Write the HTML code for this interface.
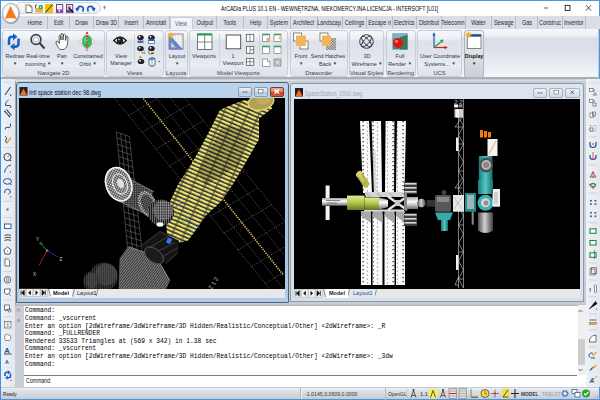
<!DOCTYPE html>
<html><head><meta charset="utf-8">
<style>
*{margin:0;padding:0;box-sizing:border-box}
html,body{width:600px;height:400px;overflow:hidden;background:#c9ced6;font-family:"Liberation Sans",sans-serif;color:#222;position:relative}
.a{position:absolute}
svg{position:absolute;overflow:visible}
#lb{left:0;top:0;width:1px;height:400px;background:#3d8fdf}
#title{left:1px;top:0;width:599px;height:16px;background:#fff}
#ttxt{left:221px;top:3.5px;font-size:7px;line-height:9px;color:#000;white-space:nowrap;transform:scaleX(.738);transform-origin:0 0}
#tabs{left:1px;top:16px;width:599px;height:13px;background:#d9dde5}
.tab{top:16px;height:13px;font-size:6.5px;color:#252a35;line-height:14px;border-right:1px solid #b8bdc6;white-space:nowrap;text-align:center}
.tab span{display:inline-block;transform:scaleX(.84);margin:0 -8px}
.tab.sel{top:17px;height:12px;line-height:12px;background:linear-gradient(#f4f6f9,#e9edf2);border:1px solid #c9ced6;border-bottom:none;color:#4a5a75}
#ribbon{left:1px;top:29px;width:598px;height:50px;background:linear-gradient(#f6f7fa,#eff1f5 14%,#d9dde8 20%,#dde1ea 45%,#e7ecf1 75%,#eff6f8 96%);border-bottom:2px solid #a9aeb6;border-right:1px solid #c4c8d0;border-radius:0 0 2px 0}
.pnl{top:30px;height:47px;border:1px solid #c8cdd6;border-radius:3px;background:linear-gradient(#f6f7fa,#eef0f5 16%,#dde1ea 24%,#e0e4ec 50%,#e8edf2 80%,#edf3f6)}
.plbl{position:absolute;bottom:0;left:0;right:0;height:9px;font-size:5.8px;color:#3a4152;text-align:center;line-height:12px;white-space:nowrap;background:linear-gradient(#e4e8ee,#dde1e8);border-radius:0 0 3px 3px}
.bl b{font-weight:normal;font-size:4.6px;vertical-align:.8px}
.bl{position:absolute;font-size:5.9px;color:#2e3445;text-align:center;line-height:7.1px;white-space:nowrap;transform:translateX(-50%) scaleX(.93)}
.sep{position:absolute;width:1px;background:#cfd3da}
</style></head><body>
<div id="lb" class="a"></div>
<div id="title" class="a"></div>
<div id="ttxt" class="a">ArCADia PLUS 10.1 EN - WEWNĘTRZNA, NIEKOMERCYJNA LICENCJA - INTERSOFT [L01]</div>
<!-- window controls -->
<div class="a" style="left:0;top:0;width:600px;height:1px;background:#4a96e0"></div>
<div class="a" style="left:599px;top:0;width:1px;height:400px;background:#4a96e0"></div>
<svg style="left:0;top:0" width="600" height="16">
 <line x1="543.7" y1="8" x2="548.3" y2="8" stroke="#555" stroke-width=".9"/>
 <rect x="565.2" y="5.4" width="4.8" height="5.1" fill="none" stroke="#222" stroke-width=".9"/>
 <path d="M586 5.2 L591 10.6 M591 5.2 L586 10.6" stroke="#222" stroke-width=".8"/>
</svg>
<div id="tabs" class="a"></div>
<div class="a tab" style="left:22.0px;width:26.0px"><span>Home</span></div>
<div class="a tab" style="left:48.0px;width:21.7px"><span>Edit</span></div>
<div class="a tab" style="left:69.7px;width:24.8px"><span>Draw</span></div>
<div class="a tab" style="left:94.5px;width:24.5px"><span>Draw 3D</span></div>
<div class="a tab" style="left:119.0px;width:25.0px"><span>Insert</span></div>
<div class="a tab" style="left:144.0px;width:25.5px"><span>Annotati</span></div>
<div class="a tab sel" style="left:169.5px;width:23.5px"><span>View</span></div>
<div class="a tab" style="left:193.0px;width:24.0px"><span>Output</span></div>
<div class="a tab" style="left:217.0px;width:27.0px"><span>Tools</span></div>
<div class="a tab" style="left:244.0px;width:23.5px"><span>Help</span></div>
<div class="a tab" style="left:267.5px;width:23.5px"><span>System</span></div>
<div class="a tab" style="left:291.0px;width:26.5px"><span>Architect</span></div>
<div class="a tab" style="left:317.5px;width:25.0px"><span>Landscap</span></div>
<div class="a tab" style="left:342.5px;width:24.5px"><span>Ceilings</span></div>
<div class="a tab" style="left:367.0px;width:25.5px"><span>Escape n</span></div>
<div class="a tab" style="left:392.5px;width:24.5px"><span>Electrics</span></div>
<div class="a tab" style="left:417.0px;width:24.7px"><span>Distribut</span></div>
<div class="a tab" style="left:441.7px;width:24.3px"><span>Telecomn</span></div>
<div class="a tab" style="left:466.0px;width:25.7px"><span>Water</span></div>
<div class="a tab" style="left:491.7px;width:24.3px"><span>Sewage</span></div>
<div class="a tab" style="left:516.0px;width:22.0px"><span>Gas</span></div>
<div class="a tab" style="left:538.0px;width:25.0px"><span>Construc</span></div>
<div class="a tab" style="left:563.0px;width:23.0px"><span>Inventor</span></div>
<div id="ribbon" class="a"></div>
<!-- panels -->
<div class="a pnl" style="left:2px;width:103px"><div class="plbl">Navigate 2D</div></div>
<div class="a pnl" style="left:106px;width:57.5px"><div class="plbl">Views</div></div>
<div class="a pnl" style="left:165px;width:22.5px"><div class="plbl">Layouts</div></div>
<div class="a pnl" style="left:189px;width:98.5px"><div class="plbl">Model Viewports</div></div>
<div class="a pnl" style="left:290px;width:57.5px"><div class="plbl">Draworder</div></div>
<div class="a pnl" style="left:349px;width:35px"><div class="plbl">Visual Styles</div></div>
<div class="a pnl" style="left:385.5px;width:30px"><div class="plbl">Rendering</div></div>
<div class="a pnl" style="left:417px;width:45px"><div class="plbl">UCS</div></div>
<div class="a" style="left:464px;top:30px;width:20px;height:47.5px;border:1px solid #aeb3bc;border-radius:3px;background:linear-gradient(#f3f4f7,#e6e8ed 20%,#dcdfe5 50%,#d0d4db 85%,#cacdd4)"></div>
<!-- labels -->
<div class="bl" style="left:14.5px;top:53px">Redraw<br><b>▼</b></div>
<div class="bl" style="left:38px;top:53px">Real-time<br>zooming <b>▼</b></div>
<div class="bl" style="left:62px;top:53px">Pan<br><b>▼</b></div>
<div class="bl" style="left:87.5px;top:53px">Constrained<br>Orbit <b>▼</b></div>
<div class="bl" style="left:120.5px;top:53px">View<br>Manager</div>
<div class="bl" style="left:176.5px;top:53px">Layout<br><b>▼</b></div>
<div class="bl" style="left:204px;top:53px">Viewports</div>
<div class="bl" style="left:233px;top:53px">1<br>Viewport</div>
<div class="bl" style="left:301px;top:53px">Front<br><b>▼</b></div>
<div class="bl" style="left:327.5px;top:53px">Send Hatches<br>Back <b>▼</b></div>
<div class="bl" style="left:366.5px;top:53px">3D<br>Wireframe <b>▼</b></div>
<div class="bl" style="left:400px;top:53px">Full<br>Render <b>▼</b></div>
<div class="bl" style="left:439.5px;top:53px">User Coordinate<br>Systems... <b>▼</b></div>
<div class="bl" style="left:474px;top:53px;color:#111;font-weight:bold;font-size:5.6px">Display<br><b>▼</b></div>
<div class="sep" style="left:133.5px;top:34px;height:32px"></div>
<div class="sep" style="left:218.5px;top:34px;height:32px"></div>
<div class="sep" style="left:259px;top:34px;height:32px"></div>
<svg style="left:0;top:29px" width="600" height="50">
 <!-- Redraw arrows -->
 <path d="M9 16 V11 Q9 7.8 12.2 7.8 H13.5" fill="none" stroke="#1a62c0" stroke-width="2.5"/>
 <path d="M13 4.2 L17.5 7.8 L13 11.4 Z" fill="#1a62c0"/>
 <path d="M18.5 9.5 V14.5 Q18.5 17.7 15.3 17.7 H14" fill="none" stroke="#1a62c0" stroke-width="2.5"/>
 <path d="M14.5 14.1 L10 17.7 L14.5 21.3 Z" fill="#1a62c0"/>
 <!-- magnifier -->
 <circle cx="36" cy="10.5" r="4.8" fill="#fff" stroke="#404040" stroke-width="1.8"/>
 <circle cx="36" cy="10.5" r="2.6" fill="none" stroke="#5a7ac0" stroke-width=".6"/>
 <path d="M39.6 14 L44.5 19.5" stroke="#3a3a3a" stroke-width="2"/>
 <!-- hand -->
 <path d="M57 12 L59.5 14.5 L59 7 Q59.5 5.5 60.5 7 L61 11 L61 5 Q62 3.8 63 5 L63 11 L63.5 5.5 Q64.5 4.5 65.5 6 L65.5 11.5 L66.5 7.5 Q67.8 7 68 8.5 L67.5 15 Q66.5 20 63 20.5 L60 20.5 Q58 19 56 14 Q56 12 57 12 Z" fill="#fff" stroke="#222" stroke-width=".7"/>
 <!-- orbit -->
 <path d="M87 4 L94.5 12.5 L87 21 L79.5 12.5 Z" fill="#f2f2f2" stroke="#aaa" stroke-width=".6"/>
 <ellipse cx="87" cy="12.5" rx="5" ry="6.5" fill="#3cb45a"/>
 <ellipse cx="86" cy="11" rx="2" ry="3" fill="#7ad88a" opacity=".7"/>
 <path d="M87 3 V22" stroke="#e8202a" stroke-width="1" stroke-dasharray="2 1"/>
 <path d="M85.5 5 L87 2.5 L88.5 5 Z" fill="#e8202a"/>
 <!-- eye -->
 <path d="M113.8 11.5 Q120 4.6 126.2 11.5 Q120 18.4 113.8 11.5 Z" fill="#fff" stroke="#1a1a1a" stroke-width="1.4"/>
 <circle cx="120" cy="11.5" r="3.2" fill="#222"/>
 <circle cx="119" cy="10.5" r="0.8" fill="#ddd"/>
 <!-- small view icons -->
 <g transform="translate(0,1)">
 <g fill="#222">
  <ellipse cx="140.5" cy="7.5" rx="3.3" ry="2.6"/><ellipse cx="151.5" cy="7.5" rx="3.3" ry="2.6"/>
  <ellipse cx="140.5" cy="18.5" rx="3.3" ry="2.6"/><ellipse cx="151.5" cy="18.5" rx="3.3" ry="2.6"/>
  <ellipse cx="141" cy="31.5" rx="3.3" ry="2.6"/>
 </g>
 <g fill="#fff"><circle cx="139.6" cy="6.8" r=".9"/><circle cx="150.6" cy="6.8" r=".9"/><circle cx="139.6" cy="17.8" r=".9"/><circle cx="150.6" cy="17.8" r=".9"/><circle cx="140.1" cy="30.8" r=".9"/></g>
 <path d="M137.5 10.5 h6 v2.5 h-6z" fill="#3a78c8"/><path d="M140 10.5 v2.5" stroke="#d33" stroke-width=".9"/>
 <rect x="148.7" y="9.8" width="5.6" height="3.6" fill="#fff" stroke="#2a5aa8" stroke-width=".7"/>
 <rect x="148.7" y="9.8" width="5.6" height="1.2" fill="#2a5aa8"/>
 <circle cx="143" cy="21.8" r="1.4" fill="#fff" stroke="#333" stroke-width=".5"/><path d="M144 22.8 l1.2 1.2" stroke="#333" stroke-width=".6"/>
 <path d="M148.8 20.3 v3.6 h4" stroke="#2a2" stroke-width=".8" fill="none"/><rect x="151" y="22.5" width="3" height="1.5" fill="#d22"/>
 <circle cx="140.5" cy="27.3" r="1.4" fill="#f0a020"/>
 <path d="M149 29 L152 27.5 L155 28.5 V35 L152 36.5 L149 35 Z" fill="#fff" stroke="#1f3f70" stroke-width=".8"/>
 <path d="M149 29 L152 30.3 L155 28.5 M152 30.3 V36.5" fill="none" stroke="#1f3f70" stroke-width=".5"/>
 <path d="M149 29 L152 27.5 L155 28.5 L152 30.3 Z" fill="#4a8ad8"/>
 </g>
 <path d="M158 32 h2.5 l-1.25 1.3z" fill="#444"/>
 <!-- layout icon -->
 <rect x="169" y="5" width="14" height="15" fill="#fff" stroke="#555" stroke-width=".7"/>
 <path d="M169.5 7 h13 M169.5 10 h13 M169.5 13 h13 M169.5 16 h13 M172 5 v15 M175 5 v15 M178 5 v15 M181 5 v15" stroke="#bbb" stroke-width=".4"/>
 <path d="M169 5 L169 20.5 L183 20.5 Z" fill="#6a82c8"/>
 <path d="M171 13 L171 18.5 L176 18.5 Z" fill="#c8ccd8"/>
 <path d="M171 2.5 v8 M167 6.5 h8 M168.2 3.7 l5.6 5.6 M173.8 3.7 l-5.6 5.6" stroke="#f6b22a" stroke-width=".7"/><circle cx="171" cy="6.5" r="2" fill="#f6b22a"/>
 <!-- viewports icon -->
 <rect x="197.5" y="5" width="14.5" height="15.5" fill="#fff" stroke="#444" stroke-width=".7"/>
 <rect x="197.5" y="4.5" width="14.5" height="2" fill="#18a058"/>
 <path d="M197.5 13 h14.5 M204.7 6 v14.5" stroke="#666" stroke-width=".8"/>
 <!-- 1 viewport -->
 <rect x="226.2" y="6" width="14.5" height="13.8" fill="#fff" stroke="#444" stroke-width=".9"/>
 <g transform="translate(0,1)">
 <g fill="#fff" stroke="#444" stroke-width=".7">
  <rect x="246.3" y="4.3" width="7.5" height="7"/><rect x="246.3" y="16.3" width="7.5" height="7"/><rect x="246.3" y="28.3" width="7.5" height="7"/>
 </g>
 <path d="M250 4.3 v7 M250 16.3 v7 M250 19.8 h3.8 M250 28.3 v7 M246.3 31.8 h7.5" stroke="#444" stroke-width=".6"/>
 <g fill="#fff" stroke="#666" stroke-width=".6">
  <rect x="262.5" y="4" width="7" height="7.5"/><rect x="274" y="4" width="7" height="7.5"/>
  <rect x="262.5" y="16" width="7" height="7.5"/><rect x="274" y="16" width="7" height="7.5"/>
  <path d="M262.5 29 h5 v2.5 h2.5 v5 h-7.5z"/><rect x="274" y="29" width="7" height="7" fill="#ccc"/>
 </g>
 <rect x="262.5" y="4" width="7" height="1.3" fill="#2aa860"/><rect x="274" y="4" width="7" height="1.3" fill="#2aa860"/>
 <rect x="262.5" y="16" width="7" height="1.3" fill="#2aa860"/><rect x="274" y="16" width="7" height="1.3" fill="#2aa860"/>
 <circle cx="268" cy="9.5" r="1.8" fill="#e0b860"/><circle cx="280" cy="8" r="1.6" fill="#e8d070"/>
 <rect x="276" y="31" width="3" height="3" fill="#eee" stroke="#888" stroke-width=".4"/>
 
 </g>
<!-- front -->
 <rect x="293.5" y="4" width="8" height="8" fill="#fff" stroke="#555" stroke-width=".7"/>
 <rect x="300" y="12" width="8" height="8" fill="#fff" stroke="#555" stroke-width=".7"/>
 <rect x="296" y="6.5" width="10" height="10.5" fill="#f0b45a"/>
 <!-- send hatches back -->
 <rect x="320" y="4" width="8" height="8" fill="#fff" stroke="#555" stroke-width=".7"/>
 <defs><pattern id="chk" width="1.6" height="1.6" patternUnits="userSpaceOnUse"><rect width="1.6" height="1.6" fill="#f4f4f4"/><rect width=".8" height=".8" fill="#555"/><rect x=".8" y=".8" width=".8" height=".8" fill="#555"/></pattern></defs>
 <rect x="326" y="9" width="10" height="12" fill="url(#chk)"/>
 <rect x="322" y="6.5" width="9" height="10.5" fill="#f0b45a"/>
 <!-- wireframe sphere -->
 <g fill="none" stroke="#1f2a38" stroke-width=".9">
  <circle cx="366.5" cy="12.5" r="6.8"/>
  <ellipse cx="366.5" cy="12.5" rx="6.8" ry="2.6" transform="rotate(48 366.5 12.5)"/>
  <ellipse cx="366.5" cy="12.5" rx="6.8" ry="2.6" transform="rotate(-48 366.5 12.5)"/>
 </g>
 <!-- full render -->
 <rect x="392.5" y="4.5" width="15" height="16" fill="#4a8a6a"/>
 <rect x="392.5" y="4.5" width="15" height="5" fill="#7ab0c8"/>
 <path d="M400 8 L407.5 6 L407.5 20.5 L400 20.5 Z" fill="#3a7a58"/>
 <circle cx="398" cy="14" r="5" fill="#d81818"/>
 <circle cx="396.5" cy="12.3" r="1.5" fill="#ff8080"/>
 <!-- UCS -->
 <path d="M434 6 V18.5" stroke="#1a5aa8" stroke-width="1.2"/>
 <path d="M434 18.5 H445" stroke="#d82020" stroke-width="1.2"/>
 <path d="M434 18.5 L441.5 12.5" stroke="#18a048" stroke-width="1.2"/>
 <path d="M432.3 6.5 L434 3.2 L435.7 6.5z" fill="#1a5aa8"/>
 <path d="M444.5 16.8 L447.8 18.5 L444.5 20.2z" fill="#d82020"/>
 <path d="M440 11 L443.5 10.5 L442.5 14z" fill="#18a048"/>
 <!-- display -->
 <rect x="467.2" y="5.5" width="13.8" height="14" fill="#fff" stroke="#555" stroke-width=".7"/>
 <rect x="467.2" y="5.5" width="13.8" height="2.2" fill="#1f4fa8"/>
 <circle cx="468.5" cy="5.8" r="2.3" fill="#f7b02a"/>
 <path d="M468.5 2.3 v7 M465 5.8 h7 M466 3.3 l5 5 M471 3.3 l-5 5" stroke="#f7b02a" stroke-width=".6"/>
</svg>
<!-- QAT -->
<div class="a" style="left:15px;top:2px;width:86px;height:12px;border:1px solid #cfd3da;border-radius:6px;background:linear-gradient(#fafbfc,#eceef2)"></div>
<svg style="left:0;top:0" width="110" height="28">
 <defs>
  <radialGradient id="lg" cx="40%" cy="35%" r="70%"><stop offset="0" stop-color="#f4f4f4"/><stop offset=".7" stop-color="#d0d0d0"/><stop offset="1" stop-color="#8a8a8a"/></radialGradient>
 </defs>
 <ellipse cx="10.85" cy="13.4" rx="8.8" ry="10.3" fill="url(#lg)" stroke="#a0a0a0" stroke-width=".6"/>
 <ellipse cx="10.85" cy="13.4" rx="7.3" ry="8.8" fill="#fbfbfb"/>
 <path d="M10.4 5.8 L17 19.2 Q11 17.2 5 18.8 Z" fill="#f47a1a"/>
 <!-- new -->
 <path d="M26 5 h4 l2 2 v5.5 h-6 z" fill="#fff" stroke="#444" stroke-width=".7"/><path d="M30 5 v2 h2" fill="none" stroke="#444" stroke-width=".5"/>
 <circle cx="26.2" cy="5.6" r="1.5" fill="#f7b733"/>
 <!-- open -->
 <path d="M35.5 8 h7.5 v4.5 h-7.5 z" fill="#f0b040"/>
 <circle cx="40.8" cy="7" r="2.2" fill="#2aa866"/><path d="M40 6 l1.5 1 l-1.5 1z" fill="#fff"/>
 <path d="M35.5 5 v3.5 M35.5 5 h1.5" stroke="#333" stroke-width=".8" fill="none"/>
 <!-- yellow -->
 <rect x="45" y="4" width="8" height="9" fill="#f2c200"/>
 <path d="M45.5 12.5 L52.5 4.5" stroke="#222" stroke-width="1"/>
 <!-- save -->
 <rect x="56.5" y="4.5" width="6.2" height="7.8" fill="#fff" stroke="#7a3a9a" stroke-width="1"/>
 <rect x="56.5" y="9.5" width="6.2" height="2.8" fill="#7a3a9a"/><rect x="58.3" y="10.3" width="2" height="1.3" fill="#fff"/><rect x="57.8" y="5.5" width="3.6" height="2.6" fill="#e8e8e8"/>
 <!-- saveas -->
 <rect x="66.5" y="4.5" width="6.2" height="7.8" fill="#fff" stroke="#7a3a9a" stroke-width="1"/>
 <rect x="66.5" y="9.5" width="6.2" height="2.8" fill="#7a3a9a"/><rect x="67.5" y="5.5" width="3.5" height="3" fill="#e0a090"/>
 <path d="M68.5 7.5 L73.5 12.5" stroke="#111" stroke-width="1.3"/>
 <!-- undo -->
 <path d="M82.8 11.6 Q84.6 6.2 80.2 6.4 Q78 6.6 77.4 9" fill="none" stroke="#1a5ac8" stroke-width="1.7"/>
 <path d="M75.3 7.8 L79.6 8.4 L76.9 11.8 Z" fill="#1a5ac8"/>
 <!-- redo -->
 <path d="M88.2 11.6 Q86.4 6.2 90.8 6.4 Q93 6.6 93.6 9" fill="none" stroke="#1a5ac8" stroke-width="1.7"/>
 <path d="M95.7 7.8 L91.4 8.4 L94.1 11.8 Z" fill="#1a5ac8"/>
 <!-- dropdown -->
 <path d="M103.5 6.3 h2 M103.5 7.5 h2" stroke="#333" stroke-width=".6"/>
 <path d="M103.6 8.6 L105.4 8.6 L104.5 9.6 Z" fill="#333"/>
</svg>
<style>
#mdi{left:14px;top:80px;width:572px;height:226px;background:#c8ccd3;border-top:1px solid #dde0e5;border-left:2px solid #a2a6ac}
.tbar{width:14px;background:linear-gradient(90deg,#eef1f5,#e4e8ee)}
.grip{position:absolute;left:3px;width:8px;height:1px;border-top:1px dotted #9aa}
.wbtn{position:absolute;height:10px;border:1px solid #8a9bb0;border-radius:2px;background:linear-gradient(#e6eef7,#d4e0ee 48%,#b4c8df 52%,#c4d6ea)}
.wbtn.c{border-color:#7a3a30;background:linear-gradient(#eaa898,#de8270 48%,#c4422c 52%,#d05a40)}
.wtxt{position:absolute;font-size:6.6px;line-height:8px;white-space:nowrap}
.tabbar{position:absolute;background:#e8e8e8}
.nb{position:absolute;top:1px;width:6.5px;height:7px;background:linear-gradient(#f5f5f5,#d8d8d8);border:1px solid #b0b0b0}
.mtab{position:absolute;font-size:6px;line-height:8px;white-space:nowrap}
</style>
<div id="mdi" class="a"></div>
<!-- left toolbar -->
<div class="a tbar" style="left:1px;top:79px;height:308px"></div>
<div class="a tbar" style="left:586px;top:79px;height:308px"></div>
<!-- window 1 -->
<div class="a" style="left:16px;top:81.5px;width:273px;height:221px;border:1px solid #4a6478;border-radius:3px 3px 0 0;background:linear-gradient(#bcd3ec,#aec8e6 30%,#a9c4e4 70%,#b0cae7)"></div>
<div class="a" style="left:19px;top:97.5px;width:266px;height:191px;background:#000" id="vp1"></div>
<div class="tabbar" style="left:19px;top:288.5px;width:266px;height:9px"></div>
<div class="wbtn" style="left:237.5px;top:86.5px;width:14px"></div>
<div class="wbtn" style="left:253.5px;top:86.5px;width:14px"></div>
<div class="wbtn c" style="left:269.5px;top:86.5px;width:14.5px"></div>
<svg style="left:0;top:0" width="600" height="400">
 <rect x="243" y="91.5" width="4" height="1.3" fill="#fff" stroke="#444" stroke-width=".4"/>
 <rect x="258.5" y="89.5" width="4.5" height="3.5" fill="#fff" stroke="#444" stroke-width=".5"/>
 <path d="M274.5 89.5 L279 93.5 M279 89.5 L274.5 93.5" stroke="#fff" stroke-width="1.5"/>
 <rect x="19.5" y="87" width="8" height="8.5" fill="#1a2230"/>
 <path d="M23.5 88.5 L27 95 L20 95 Z" fill="#ff6a10"/>
</svg>
<div class="wtxt" style="left:29px;top:88.8px;color:#10102a;transform:scaleX(.845);transform-origin:0 0">Intl space station dec 98.dwg</div>
<!-- window 2 -->
<div class="a" style="left:289.5px;top:82.5px;width:294px;height:219.5px;border:1px solid #8f9aa8;border-radius:3px 3px 0 0;background:linear-gradient(#dde5ee,#dae3ed 10%,#d8e1eb)"></div>
<div class="a" style="left:294px;top:99px;width:286px;height:190px;background:#000" id="vp2"></div>
<div class="tabbar" style="left:294px;top:289px;width:286px;height:9px"></div>
<div class="wbtn" style="left:533px;top:88px;width:14px;border-color:#a7b3c2;background:linear-gradient(#eef2f7,#dde5ee 50%,#d2dce8)"></div>
<div class="wbtn" style="left:549px;top:88px;width:14px;border-color:#a7b3c2;background:linear-gradient(#eef2f7,#dde5ee 50%,#d2dce8)"></div>
<div class="wbtn" style="left:565px;top:88px;width:14.5px;border-color:#a7b3c2;background:linear-gradient(#eef2f7,#dde5ee 50%,#d2dce8)"></div>
<svg style="left:0;top:0" width="600" height="400">
 <rect x="538" y="92.5" width="4" height="1.3" fill="#fff" stroke="#555" stroke-width=".4"/>
 <rect x="554" y="90.5" width="4.5" height="3.5" fill="#fff" stroke="#555" stroke-width=".5"/>
 <path d="M570.5 90.5 L574 94 M574 90.5 L570.5 94" stroke="#666" stroke-width="1"/>
 <rect x="295" y="88" width="8" height="8.5" fill="#1a2230"/>
 <path d="M299 89.5 L302.5 96 L295.5 96 Z" fill="#ff6a10"/>
</svg>
<div class="wtxt" style="left:304.7px;top:89.6px;color:#a0a8b4;transform:scaleX(.80);transform-origin:0 0">SpaceStation_2000.dwg</div>
<svg class="a" style="left:19px;top:97.5px;overflow:hidden" width="266" height="191" viewBox="19 97.5 266 191">
<defs>
<pattern id="ystripe" width="11" height="3.85" patternUnits="userSpaceOnUse" patternTransform="rotate(23)"><rect width="11" height="3.85" fill="#0e0e0c"/><rect width="11" height="2.3" fill="#ece47a"/><rect x="2" y="2.3" width="3" height=".45" fill="#c8c060"/><rect x="7.5" y="0" width=".9" height="2" fill="#2a2a22"/><rect y="2.75" width="11" height=".55" fill="#505048"/></pattern>
<pattern id="mesh" width="1.6" height="1.6" patternUnits="userSpaceOnUse"><rect width="1.6" height="1.6" fill="#404040"/><rect width="1" height="1" fill="#f0f0f0"/></pattern>
<pattern id="meshl" width="2" height="2" patternUnits="userSpaceOnUse"><rect width="2" height="2" fill="#181818"/><rect width="1" height="1" fill="#b8b8b8"/></pattern>
<pattern id="meshg" width="1.8" height="1.8" patternUnits="userSpaceOnUse"><rect width="1.8" height="1.8" fill="#2e2e2e"/><rect width="1" height="1" fill="#8a8a8a"/></pattern>
<pattern id="meshd" width="2" height="2" patternUnits="userSpaceOnUse"><rect width="2" height="2" fill="#1a1a1a"/><rect width="1" height="1" fill="#555"/></pattern>
<pattern id="cstripe" width="6" height="1.5" patternUnits="userSpaceOnUse" patternTransform="rotate(62)"><rect width="6" height="1.5" fill="#333"/><rect width="6" height=".6" fill="#9a9a9a"/></pattern>
</defs>
<path d="M114.0 97 L270.1 289 M128.0 97 L284.1 289 M156.0 97 L312.1 289 M170.0 97 L326.1 289 M184.5 97 L340.6 289 M128.6 115.0 L176.0 86.6 M142.3 131.8 L189.7 103.4 M156.0 148.6 L203.3 120.2 M169.6 165.4 L217.0 137.0 M183.3 182.2 L230.6 153.8 M196.9 199.0 L244.3 170.6 M210.6 215.8 L258.0 187.4 M224.2 232.6 L271.6 204.2 M237.9 249.4 L285.3 221.0 M251.6 266.2 L298.9 237.8 M265.2 283.0 L312.6 254.6 M278.9 299.8 L326.3 271.4" stroke="#b0b0a8" stroke-width=".55" stroke-dasharray="1.3 1.5" fill="none" opacity=".85"/>
<path d="M143.3 98 L283 274" stroke="#d4b060" stroke-width="1.6" stroke-dasharray="1.4 1"/>
<path d="M116.4 131.5 L127.7 248.0 M120.7 133.0 L132.6 249.3 M125.1 134.5 L137.4 250.7 M129.4 136.0 L142.3 252.0 M116.4 131.5 L129.4 136.0 M117.0 137.6 L130.1 142.1 M117.6 143.8 L130.8 148.3 M118.2 149.9 L131.4 154.4 M118.8 156.0 L132.1 160.5 M119.4 162.2 L132.8 166.7 M120.0 168.3 L133.5 172.8 M120.6 174.4 L134.2 178.9 M121.2 180.6 L134.8 185.1 M121.8 186.7 L135.5 191.2 M122.3 192.8 L136.2 197.3 M122.9 198.9 L136.9 203.4 M123.5 205.1 L137.5 209.6 M124.1 211.2 L138.2 215.7 M124.7 217.3 L138.9 221.8 M125.3 223.5 L139.6 228.0 M125.9 229.6 L140.3 234.1 M126.5 235.7 L140.9 240.2 M127.1 241.9 L141.6 246.4 M127.7 248.0 L142.3 252.5" stroke="#8a8a8a" stroke-width=".45" fill="none"/>
<path d="M127.5 177.5 L153.75 191 L143.75 212.5 L117.5 200 Z" fill="url(#meshg)"/>
<path d="M127.5 177.5 L153.75 191 M117.5 200 L143.75 212.5" stroke="#cfcfcf" stroke-width=".5"/>
<ellipse cx="147.5" cy="203.5" rx="8.75" ry="13.75" transform="rotate(-22 147.5 203.5)" fill="url(#mesh)"/>
<ellipse cx="147.5" cy="203.5" rx="6" ry="10" transform="rotate(-22 147.5 203.5)" fill="url(#meshg)"/>
<ellipse cx="118.75" cy="183.75" rx="13.5" ry="18" transform="rotate(-20 118.75 183.75)" fill="url(#mesh)"/>
<ellipse cx="118.75" cy="183.75" rx="12.6" ry="17.1" transform="rotate(-20 118.75 183.75)" fill="none" stroke="#f8f8f8" stroke-width="1.5"/>
<ellipse cx="120" cy="183.5" rx="7" ry="10.5" transform="rotate(-20 120 183.5)" fill="url(#mesh)" stroke="#fafafa" stroke-width=".9"/>
<ellipse cx="120.5" cy="183" rx="3.2" ry="5" transform="rotate(-20 120.5 183)" fill="#e0e0e0"/>
<path d="M219.7 110 L226 106.5 L243 100 L270 98 L272 108 L259 118 L259 139 L234 182 L222 200 L206 215 L197 228 L188 240 L177 243 L167 233 L165 212 L178 184 L193.8 159.5 L208.4 132.5 Z" fill="url(#ystripe)"/>
<ellipse cx="261" cy="101.5" rx="13" ry="8" transform="rotate(-12 261 101.5)" fill="#b0a058" stroke="#e8e070" stroke-width="1.2"/>
<ellipse cx="263" cy="100" rx="7" ry="4" fill="#c8b060" opacity=".7"/>
<path d="M222 126 L250 128 L238 165 L206 185 L198 172 Z" fill="#000" opacity=".25"/>
<path d="M166 203 L193 232" stroke="#20c040" stroke-width=".6"/>
<path d="M164 213 L168 210 M185 218 L200 228 M176 206 L183 202" stroke="#2040e0" stroke-width=".8"/>
<circle cx="161" cy="212" r="13" fill="url(#meshl)"/>
<circle cx="163" cy="210" r="10" fill="url(#mesh)" opacity=".55"/>
<ellipse cx="160" cy="224" rx="3.5" ry="2.2" fill="#fff"/>
<path d="M140 246 L160 231 L179 240 L178 252 L166 263 Z" fill="#141414"/>
<path d="M140 246 L160 231 L179 240 M146 249 L168 236 M154 253 L175 242 M160 258 L178 247 M166 263 L178 252" stroke="#7a7a7a" stroke-width=".45" fill="none"/>
<rect x="167" y="237.5" width="4.5" height="5.5" fill="#2a7ae8" transform="rotate(25 169 240)"/>
<path d="M128.6 246 L145 252 L160.7 264 L170 280 L166 289 L119 289 L120 258 Z" fill="url(#cstripe)"/>
<path d="M128.6 246 L145 252 L160.7 264 L170 280" fill="none" stroke="#a0a0a0" stroke-width=".7"/>
<path d="M128.6 246 L120 258 L119 289" fill="none" stroke="#707070" stroke-width=".6"/>
<ellipse cx="154" cy="255" rx="11" ry="6.5" transform="rotate(38 154 255)" fill="#1c1c1c" stroke="#5a5a5a" stroke-width=".9"/>
<circle cx="104" cy="276" r="14" fill="url(#meshd)"/>
<circle cx="106" cy="274" r="11" fill="#606060" opacity=".45"/>
<ellipse cx="91" cy="281" rx="8" ry="10" fill="url(#meshd)"/>
<ellipse cx="92" cy="280" rx="6" ry="8" fill="#606060" opacity=".4"/>
<path d="M47 250 L40 242" stroke="#1fa03a" stroke-width=".9"/>
<path d="M47 250 L58 256.5" stroke="#1838c8" stroke-width=".9"/>
<path d="M47 250 L39 265" stroke="#c02020" stroke-width=".9"/>
<circle cx="47" cy="250" r="1" fill="none" stroke="#ddd" stroke-width=".5"/>
<circle cx="41" cy="243" r="1.2" fill="none" stroke="#1fa03a" stroke-width=".6"/>
<text x="36" y="240" fill="#ddd" font-size="4.5" font-family="Liberation Sans">Y</text>
<text x="59.5" y="260" fill="#ddd" font-size="4.5" font-family="Liberation Sans">Z</text>
<text x="33" y="275" fill="#ddd" font-size="4.5" font-family="Liberation Sans">X</text>
<text x="205" y="288" fill="#bbb" font-size="6" font-family="Liberation Sans" transform="rotate(-60 210 283)">Z 1 2</text>
</svg><svg class="a" style="left:294px;top:99px;overflow:hidden" width="286" height="190" viewBox="294 99 286 190">
<defs>
<linearGradient id="ygr" x1="0" y1="0" x2="0" y2="1"><stop offset="0" stop-color="#e0ec9a"/><stop offset=".45" stop-color="#b8cc50"/><stop offset="1" stop-color="#6a7a20"/></linearGradient>
<linearGradient id="teal" x1="0" y1="0" x2="1" y2="0"><stop offset="0" stop-color="#1a7a7a"/><stop offset=".5" stop-color="#50c8c8"/><stop offset="1" stop-color="#1a6a6a"/></linearGradient>
<linearGradient id="gcyl" x1="0" y1="0" x2="1" y2="0"><stop offset="0" stop-color="#505050"/><stop offset=".45" stop-color="#d0d0d0"/><stop offset="1" stop-color="#404040"/></linearGradient>
<linearGradient id="wcyl" x1="0" y1="0" x2="0" y2="1"><stop offset="0" stop-color="#a0a0a0"/><stop offset=".4" stop-color="#ffffff"/><stop offset="1" stop-color="#707070"/></linearGradient>
<pattern id="dots" width="10" height="4" patternUnits="userSpaceOnUse"><rect x="2.5" y="1" width="1.2" height="1.3" fill="#222"/><rect x="7" y="2.5" width="1" height="1" fill="#777"/></pattern>
</defs>
<path d="M360.0 121 L369.0 121 L372.0 193 L363.0 193 Z" fill="#fafafa"/>
<path d="M360.0 121 L369.0 121 L372.0 193 L363.0 193 Z" fill="url(#dots)"/>
<path d="M371.6 121 L381.0 121 L382.0 193 L374.0 193 Z" fill="#fafafa"/>
<path d="M371.6 121 L381.0 121 L382.0 193 L374.0 193 Z" fill="url(#dots)"/>
<path d="M385.6 121 L394.4 121 L394.0 193 L385.0 193 Z" fill="#fafafa"/>
<path d="M385.6 121 L394.4 121 L394.0 193 L385.0 193 Z" fill="url(#dots)"/>
<path d="M397.0 121 L406.0 121 L404.5 193 L396.0 193 Z" fill="#fafafa"/>
<path d="M397.0 121 L406.0 121 L404.5 193 L396.0 193 Z" fill="url(#dots)"/>
<path d="M372.5 150 L375.5 150 L377 193 L374 193Z" fill="#b8b8b8" opacity=".5"/>
<path d="M364 192 L403 192 L405 197 L366 197 Z" fill="#d4d4d4"/><path d="M366 193 l5 4 M377 193 l5 4 M389 193 l5 4" stroke="#888" stroke-width=".6"/>
<path d="M361.0 214 L371.0 214 L371.0 285 L361.0 285 Z" fill="#fafafa"/>
<path d="M361.0 214 L371.0 214 L371.0 285 L361.0 285 Z" fill="url(#dots)"/>
<path d="M372.5 214 L382.5 214 L382.5 285 L372.5 285 Z" fill="#fafafa"/>
<path d="M372.5 214 L382.5 214 L382.5 285 L372.5 285 Z" fill="url(#dots)"/>
<path d="M384.5 214 L394.5 214 L394.5 285 L384.5 285 Z" fill="#fafafa"/>
<path d="M384.5 214 L394.5 214 L394.5 285 L384.5 285 Z" fill="url(#dots)"/>
<path d="M396.0 214 L405.0 214 L405.0 285 L396.0 285 Z" fill="#fafafa"/>
<path d="M396.0 214 L405.0 214 L405.0 285 L396.0 285 Z" fill="url(#dots)"/>
<path d="M361.0 211 L371.0 211 L371.0 223 L361.0 216 Z" fill="#a8a8a8"/>
<path d="M372.5 211 L382.5 211 L382.5 223 L372.5 216 Z" fill="#a8a8a8"/>
<path d="M384.5 211 L394.5 211 L394.5 223 L384.5 216 Z" fill="#a8a8a8"/>
<path d="M396.0 211 L405.0 211 L405.0 223 L396.0 216 Z" fill="#a8a8a8"/>
<rect x="364" y="209.5" width="40" height="2" fill="#d8d8d8"/>
<path d="M356.5 176 L361.5 171.5 L370 184 L365 188.5 Z" fill="#b8b448"/>
<path d="M358.5 174 L363.5 181" stroke="#d8d470" stroke-width="1.5"/>
<ellipse cx="359" cy="173.8" rx="3.5" ry="2.3" transform="rotate(-42 359 173.8)" fill="#d8d070"/>
<rect x="325.6" y="185.5" width="4" height="13" fill="#f4f4f4"/><rect x="325.6" y="206" width="4" height="14" fill="#f4f4f4"/>
<rect x="322" y="198" width="25" height="7.7" fill="url(#wcyl)"/>
<path d="M326 200.5 h14 M327 203 h10" stroke="#555" stroke-width=".7"/>
<rect x="347" y="195.6" width="17.5" height="14.4" fill="url(#ygr)"/>
<rect x="364.5" y="197.4" width="14.5" height="12" fill="url(#ygr)"/>
<path d="M379 197.5 L388 200 L388 207 L379 209.5 Z" fill="url(#wcyl)"/>
<path d="M388 196.5 L407 210 M388 210 L407 196.5" stroke="#e8e8e8" stroke-width="2.2"/>
<rect x="395" y="200" width="5" height="6" fill="#c8c8c8"/>
<rect x="407" y="197" width="11" height="12" fill="url(#wcyl)"/>
<circle cx="421.5" cy="203" r="4.3" fill="url(#gcyl)"/>
<rect x="404" y="182" width="13" height="12" fill="#3a3a3a"/><rect x="404" y="213" width="13" height="13" fill="#3a3a3a"/>
<rect x="404.5" y="183" width="12" height="1.6" fill="#d8d8d8"/>
<rect x="404.5" y="187" width="12" height="1.6" fill="#d8d8d8"/>
<rect x="404.5" y="191" width="12" height="1.6" fill="#d8d8d8"/>
<rect x="404.5" y="214" width="12" height="1.6" fill="#d8d8d8"/>
<rect x="404.5" y="218" width="12" height="1.6" fill="#d8d8d8"/>
<rect x="404.5" y="222" width="12" height="1.6" fill="#d8d8d8"/>
<rect x="404" y="193" width="3" height="17" fill="#888"/>
<path d="M458.5 117 V288 M463.5 99 V288 M458.5 117.0 L463.5 126.0 M458.5 117.0 H463.5 M463.5 126.0 L458.5 135.0 M458.5 135.0 L463.5 144.0 M463.5 144.0 L458.5 153.0 M458.5 144.0 H463.5 M458.5 153.0 L463.5 162.0 M463.5 162.0 L458.5 171.0 M458.5 171.0 L463.5 180.0 M458.5 171.0 H463.5 M463.5 180.0 L458.5 189.0 M458.5 189.0 L463.5 198.0 M463.5 198.0 L458.5 207.0 M458.5 198.0 H463.5 M458.5 207.0 L463.5 216.0 M463.5 216.0 L458.5 225.0 M458.5 225.0 L463.5 234.0 M458.5 225.0 H463.5 M463.5 234.0 L458.5 243.0 M458.5 243.0 L463.5 252.0 M463.5 252.0 L458.5 261.0 M458.5 252.0 H463.5 M458.5 261.0 L463.5 270.0 M463.5 270.0 L458.5 279.0 M458.5 279.0 L463.5 288.0 M458.5 279.0 H463.5 M455 127 L462.5 117 M455 127 H462.5 M455 188 L462 178 M455 188 H462 M455 285 L458.5 277 M455 285 H458.5" stroke="#d0d0d0" stroke-width=".6" fill="none"/>
<path d="M454.5 101 q1.5 -2 3 0 l-3 3 h3 M459.5 101 q1.5 -2 3 0 l-3 3 h3" stroke="#ddd" stroke-width=".6" fill="none"/>
<rect x="454" y="104.5" width="4" height="3" fill="#f4f4f4"/><rect x="458.5" y="104.5" width="4" height="3" fill="#888"/>
<rect x="454.5" y="109" width="8.5" height="8.5" fill="#d0d0d0"/><rect x="456" y="109" width="3" height="8.5" fill="#f4f4f4"/>
<rect x="456" y="137.5" width="2.5" height="13.5" fill="#eee"/>
<rect x="456" y="255" width="2.5" height="15" fill="#f0f0f0"/>
<rect x="453" y="195" width="11" height="16.7" fill="#e8e8e8"/><path d="M454 197 l8 12 M462 197 l-8 12" stroke="#999" stroke-width=".5"/>
<path d="M416.7 198 h10 v10 h-10z" fill="#999" opacity="0"/>
<rect x="426.7" y="200" width="8.3" height="6.7" fill="#333"/>
<rect x="435" y="195" width="16" height="16.7" rx="2" fill="#585858"/><rect x="437" y="197" width="12" height="5" fill="#8a8a8a"/>
<circle cx="444" cy="192.5" r="2.5" fill="#404040"/>
<path d="M435 212.5 L453 212.5 L450 220 L438 220 Z" fill="#38a8a8"/>
<rect x="441" y="220" width="7" height="11" fill="url(#teal)"/>
<rect x="465" y="193" width="11" height="18.7" fill="#2a8a8a"/><rect x="467" y="195" width="7" height="14" fill="#ccc" opacity=".7"/>
<rect x="471.7" y="211.7" width="2" height="13" fill="#888"/>
<rect x="478.8" y="156" width="13.7" height="38" fill="url(#teal)"/>
<ellipse cx="486.2" cy="165" rx="6.8" ry="7.5" fill="#505050"/><ellipse cx="486.2" cy="165" rx="4.8" ry="5" fill="#b8b8b8"/><ellipse cx="486.2" cy="165" rx="3" ry="3" fill="#888"/>
<rect x="480" y="130" width="3" height="7.5" fill="#ee7a10"/><rect x="484" y="131" width="3" height="6.5" fill="#ee7a10"/><rect x="488" y="132" width="3" height="5.5" fill="#ee7a10"/>
<rect x="487.5" y="139" width="10" height="17" fill="#f4f4f4"/><path d="M489 154 L496 141" stroke="#d8a030" stroke-width=".8"/>
<circle cx="485.5" cy="202.8" r="8" fill="#3ab0b0"/><circle cx="485.5" cy="202.8" r="4.5" fill="#d8d8d8"/><circle cx="486" cy="203" r="2.5" fill="#909090"/>
<rect x="492.5" y="189" width="7.5" height="17.7" fill="#f0f0f0"/><rect x="494" y="192" width="4" height="12" fill="#bbb" opacity=".6"/>
<path d="M478 212.5 h15 v18 q-7.5 5 -15 0z" fill="url(#gcyl)"/>
<rect x="478" y="180" width="15" height="14" fill="url(#teal)"/>
</svg><style>
#cmd{left:15px;top:306px;width:571px;height:81px;background:#fff;box-shadow:0 -1.5px 0 #b4b8bf}
#cstrip{left:15px;top:306px;width:9px;height:81px;background:#c9ced6}
#ctext{left:24.6px;top:307.2px;font-family:"Liberation Mono",monospace;font-size:7.3px;line-height:7.65px;color:#000;white-space:pre;transform:scaleX(.857);transform-origin:0 0}
#status{left:1px;top:387px;width:598px;height:13px;background:linear-gradient(#eceef1,#dde0e5 30%,#cdd1d8 85%,#c4c8cf);border-top:1px solid #c8ccd2;border-bottom:1px solid #4a96e0}
.st{position:absolute;font-size:5.8px;color:#333;white-space:nowrap;line-height:8px}
</style>
<div id="cmd" class="a"></div>
<div id="cstrip" class="a"></div>
<div class="a" style="left:24px;top:375px;width:553px;height:1px;background:#808080"></div>
<div class="a" style="left:577.5px;top:305px;width:8px;height:70px;background:#f0f0f0"></div>
<div class="a" style="left:578px;top:339px;width:7px;height:26px;background:#cdcdcd"></div>
<div id="ctext" class="a">Command:
Command: _vscurrent
Enter an option [2dWireframe/3dWireframe/3D Hidden/Realistic/Conceptual/Other] &lt;2dWireframe&gt;: _R
Command: _FULLRENDER
Rendered 33533 Triangles at (569 x 342) in 1.38 sec
Command: _vscurrent
Enter an option [2dWireframe/3dWireframe/3D Hidden/Realistic/Conceptual/Other] &lt;2dWireframe&gt;: _3dw
Command:</div>
<div class="a" style="left:25.8px;top:376.5px;font-size:6.3px;line-height:8px;color:#111;transform:scaleX(.82);transform-origin:0 0">Command:</div>
<div id="status" class="a"></div>
<div class="st" style="left:2.8px;top:390px;transform:scaleX(.82);transform-origin:0 0;color:#222">Ready</div>
<div class="a" style="left:299.5px;top:388px;width:2px;height:11px;border-left:1px solid #b0b4bb;border-right:1px solid #f4f5f7"></div>
<div class="a" style="left:385px;top:388px;width:1px;height:12px;background:#b8bcc3"></div>
<div class="st" style="left:305px;top:390px;transform:scaleX(.9);transform-origin:0 0">-1.0145,0.0609,0.0000</div>
<div class="st" style="left:388px;top:390px;transform:scaleX(.85);transform-origin:0 0">OpenGL</div>
<svg class="a" style="left:0;top:0" width="600" height="400">
<path d="M4 82.5 h7" stroke="#9aa1ab" stroke-width=".6" stroke-dasharray=".7 1.1"/>
<path d="M589 82.8 h8" stroke="#9aa1ab" stroke-width=".6" stroke-dasharray=".7 1.1"/>
<path d="M5 95 L10.5 87" stroke="#1f4f9a" stroke-width="1.1"/><circle cx="10.7" cy="95" r=".7" fill="#222"/>
<path d="M8.5 100 Q4.5 102.5 5.5 105.5 L10.5 105.5" fill="none" stroke="#1f4f9a" stroke-width="1"/><circle cx="10.7" cy="107" r=".7" fill="#222"/>
<path d="M4.5 111 L10 117 M6.5 109.5 L11.5 115.5" stroke="#2a2f3a" stroke-width="1.1"/>
<path d="M4.5 111 L6 112.5 M10 117 L8.5 115.5" stroke="#1f4f9a" stroke-width="1.1"/>
<path d="M5 129.5 Q5.5 126 8 127.5 Q10.5 129 10.5 123.5" fill="none" stroke="#1f4f9a" stroke-width="1"/>
<path d="M5 136 Q8 137.5 6 140 Q4.5 142.5 7.5 143" fill="none" stroke="#1f4f9a" stroke-width="1"/><path d="M7.5 142 L11 137.5" stroke="#f0a020" stroke-width="1.6"/>
<path d="M3.0 147.5 h9" stroke="#c4c9d1" stroke-width=".7"/>
<circle cx="7.5" cy="157" r="3.6" fill="none" stroke="#2a2f3a" stroke-width=".9"/><path d="M7.5 157 L10 154.5" stroke="#1f4f9a" stroke-width=".7"/><circle cx="10.6" cy="160.6" r=".7" fill="#222"/>
<path d="M4.5 172.5 Q5.5 166 11 165" fill="none" stroke="#1f4f9a" stroke-width="1"/><circle cx="10.5" cy="172" r=".6" fill="#222"/>
<ellipse cx="7.5" cy="181.4" rx="4" ry="2.8" fill="none" stroke="#1f4f9a" stroke-width="1"/><circle cx="11" cy="184.5" r=".6" fill="#222"/>
<path d="M4.5 193 Q4.5 189 7.5 189 Q10.5 189 10.5 192.5 L8.5 194" fill="none" stroke="#1f4f9a" stroke-width="1"/><circle cx="10.8" cy="196.8" r=".6" fill="#222"/>
<path d="M3.0 201.4 h9" stroke="#c4c9d1" stroke-width=".7"/>
<rect x="6.5" y="208.5" width="2" height="2" fill="#666"/>
<path d="M3.0 217.6 h9" stroke="#c4c9d1" stroke-width=".7"/>
<rect x="4.5" y="224" width="6.5" height="4.5" fill="#fff" stroke="#1f4f9a" stroke-width=".9"/>
<path d="M4.5 235.5 Q8 234 11 235.5 M4.5 238 Q8 236.5 11 238 M4.5 240.5 Q8 239 11 240.5" stroke="#555" stroke-width="1.1" fill="none"/>
<path d="M7.5 247 L11 249.8 L10 254 L5 254 L4 249.8 Z" fill="#fff" stroke="#2a2f3a" stroke-width=".8"/><circle cx="7.5" cy="251" r=".6" fill="#1f4f9a"/>
<path d="M5 259 h3 l1.5 1.5 v5.5 h-4.5z" fill="#fff" stroke="#444" stroke-width=".7"/><path d="M4 258 v8 h8 v-8z" fill="none" stroke="#999" stroke-width=".4" stroke-dasharray=".8 .8"/>
<path d="M3.0 271.6 h9" stroke="#c4c9d1" stroke-width=".7"/>
<circle cx="7.5" cy="279.8" r="3.3" fill="none" stroke="#444" stroke-width=".8"/><ellipse cx="7.5" cy="279.8" rx="1" ry="1.6" fill="none" stroke="#444" stroke-width=".6"/>
<path d="M4.5 289 h6 l-1 4 l-2.5 1.5 l-2.5 -1.5z" fill="#fff" stroke="#444" stroke-width=".8"/><path d="M9 294 l1.5 1.5" stroke="#1f4f9a" stroke-width=".8"/>
<path d="M3.0 300.0 h9" stroke="#c4c9d1" stroke-width=".7"/>
<rect x="4.5" y="305" width="5" height="5" fill="#fff" stroke="#444" stroke-width=".7"/><path d="M5 311 L8 309" stroke="#1f4f9a" stroke-width=".8"/><circle cx="9.5" cy="310.5" r="1.6" fill="none" stroke="#444" stroke-width=".6"/>
<path d="M3.0 316.8 h9" stroke="#c4c9d1" stroke-width=".7"/>
<rect x="4.5" y="321.5" width="6.5" height="6.5" fill="#fff" stroke="#555" stroke-width=".6"/><path d="M4.5 321.5 L11 328 M11 321.5 L4.5 328 M7.75 321.5 v6.5" stroke="#777" stroke-width=".5"/>
<path d="M5 335 q1.5 -1.5 3 0 q2 -0.5 2.5 1.5 q1 2.5 -1 4 h-4 q-1.5 -2 -0.5 -5.5z" fill="#fff" stroke="#444" stroke-width=".6"/>
<text x="4.3" y="352.5" font-family="Liberation Sans" font-size="7.5" font-weight="bold" fill="#1a4a9a">A</text><path d="M4 354 h7.5" stroke="#1a3a7a" stroke-width=".9"/>
<text x="5" y="363.5" font-family="Liberation Sans" font-size="5.2" font-weight="bold" fill="#1a4a9a">A</text>
<path d="M4 367.7 h8" stroke="#b8bdc5" stroke-width=".6" stroke-dasharray=".8 1"/>
<path d="M5 376 V374 Q5 372.3 7 372.3 H8" fill="none" stroke="#1a62c0" stroke-width="1.6"/><path d="M7.8 370.2 L10.6 372.3 L7.8 374.4z" fill="#1a62c0"/><path d="M10.5 373.5 V376 Q10.5 377.7 8.5 377.7 H7.6" fill="none" stroke="#1a62c0" stroke-width="1.6"/><path d="M7.8 375.6 L5 377.7 L7.8 379.8z" fill="#1a62c0"/><circle cx="11" cy="380.5" r=".6" fill="#222"/>
<rect x="589.5" y="88.5" width="3.5" height="3" fill="#fff" stroke="#333" stroke-width=".5"/><path d="M594 89 v3" stroke="#d22" stroke-width=".8"/><path d="M593 95 l2 -2.5 l1.5 2.5z" fill="#fff" stroke="#1f3f70" stroke-width=".6"/>
<rect x="589.5" y="99.5" width="3.5" height="3" fill="#fff" stroke="#333" stroke-width=".5"/><path d="M594 100 v2" stroke="#d22" stroke-width=".8"/><rect x="593" y="103" width="3" height="3" fill="#fff" stroke="#1f3f70" stroke-width=".6"/>
<rect x="590" y="113" width="3.5" height="4.5" fill="#fff" stroke="#555" stroke-width=".6"/><rect x="592.5" y="112" width="3" height="4" fill="none" stroke="#555" stroke-width=".6"/>
<rect x="590" y="125.5" width="6" height="5.5" fill="none" stroke="#666" stroke-width=".5" stroke-dasharray=".8 .6"/><rect x="590" y="128" width="3" height="3" fill="#fff" stroke="#333" stroke-width=".6"/>
<path d="M589 137.0 h8" stroke="#c4c9d1" stroke-width=".7"/>
<path d="M590 142 v2.5 a3 3 0 0 0 6 0 v-2.5" fill="none" stroke="#1f4f9a" stroke-width="1.2"/><path d="M593 143 v2" stroke="#d22" stroke-width="1"/>
<path d="M590 155 v1.5 a3 3 0 0 0 6 0 v-1.5" fill="none" stroke="#1f4f9a" stroke-width="1.2"/><path d="M593 152 v8" stroke="#d22" stroke-width=".7"/>
<path d="M589 165.0 h8" stroke="#c4c9d1" stroke-width=".7"/>
<path d="M590 177 l3 -5 l3 5z" fill="none" stroke="#333" stroke-width=".7"/><path d="M593 171 v7" stroke="#d22" stroke-width=".7"/>
<path d="M590 185 q3 4 6 0 M590 185 q3 -3 6 0" fill="none" stroke="#2a8a4a" stroke-width="1.3"/><circle cx="590" cy="184.5" r=".8" fill="#d22"/><circle cx="593" cy="188" r=".8" fill="#d22"/>
<path d="M589 193.0 h8" stroke="#c4c9d1" stroke-width=".7"/>
<g fill="#1f5fb5"><rect x="590" y="200" width="1.8" height="1.6"/><rect x="594.5" y="200" width="1.8" height="1.6"/><rect x="590" y="203.3" width="1.8" height="1.6"/><rect x="594.5" y="203.3" width="1.8" height="1.6"/><rect x="590" y="212" width="1.8" height="1.6"/><rect x="594.5" y="212" width="1.8" height="1.6"/><rect x="590" y="215.5" width="1.8" height="1.6"/><rect x="594.5" y="215.5" width="1.8" height="1.6"/></g>
<path d="M589 222.8 h8" stroke="#c4c9d1" stroke-width=".7"/>
<rect x="590" y="228.8" width="6" height="4.5" fill="#fff" stroke="#1a8a3a" stroke-width="1.1"/>
<rect x="590" y="240.5" width="6" height="4.5" fill="#fff" stroke="#1a8a3a" stroke-width="1.1"/>
<rect x="590" y="252.8" width="6" height="4.5" fill="#fff" stroke="#1a8a3a" stroke-width="1.1"/>
<path d="M594.5 250 v9" stroke="#333" stroke-width=".5"/>
<path d="M589 263.0 h8" stroke="#c4c9d1" stroke-width=".7"/>
<path d="M590 269 h5 v6 h-5z M590 269 l1.5 -1.5 h5 v6 l-1.5 1.5 M591.5 267.5 v6 h5" fill="none" stroke="#444" stroke-width=".6"/>
<path d="M589 280.0 h8" stroke="#c4c9d1" stroke-width=".7"/>
<rect x="594.5" y="285" width="2" height="7.5" rx=".8" fill="#fff" stroke="#444" stroke-width=".6"/><rect x="589.5" y="288" width="1.5" height="3.5" fill="#888"/>
<path d="M589 296.6 h8" stroke="#c4c9d1" stroke-width=".7"/>
<path d="M589.5 309 L595.5 301.5 L597 304" stroke="#1f2f50" stroke-width="1"/><circle cx="596.5" cy="309" r=".6" fill="#222"/>
<path d="M589 314.0 h8" stroke="#c4c9d1" stroke-width=".7"/>
<path d="M589.5 320 h7 M590.5 319 v2 M593 319 v2 M595.5 319 v2" stroke="#444" stroke-width=".5"/><rect x="589.5" y="322.5" width="7" height="1.8" fill="#f0a020" stroke="#333" stroke-width=".3"/>
<path d="M589 330.0 h8" stroke="#c4c9d1" stroke-width=".7"/>
<path d="M589.5 342 v-2 q1 -4.5 6.5 -5 v7z" fill="#fff" stroke="#333" stroke-width=".7"/>
<path d="M589 346.8 h8" stroke="#c4c9d1" stroke-width=".7"/>
<path d="M590 357.5 a2.5 2.5 0 0 1 3 -4" fill="none" stroke="#1f4f9a" stroke-width="1"/><path d="M591 358 h4" stroke="#1f4f9a" stroke-width="1"/><path d="M592.5 356 L596.5 352" stroke="#f0a020" stroke-width="1.2"/>
<path d="M590 370.5 q2 -3 5 -4" fill="none" stroke="#1f4f9a" stroke-width="1.3"/><path d="M592.5 368.5 L596.5 365" stroke="#f0a020" stroke-width="1.2"/>
<text x="589.5" y="382.5" font-family="Liberation Sans" font-size="6.5" font-style="italic" font-weight="bold" fill="#1f4f9a">A</text><path d="M593 380 L597 376" stroke="#f0a020" stroke-width="1"/>
<rect x="19.2" y="289.0" width="6.6" height="7.6" fill="#f4f4f4" stroke="#a8a8a8" stroke-width=".5"/>
<rect x="26.3" y="289.0" width="6.6" height="7.6" fill="#f4f4f4" stroke="#a8a8a8" stroke-width=".5"/>
<rect x="33.4" y="289.0" width="6.6" height="7.6" fill="#f4f4f4" stroke="#a8a8a8" stroke-width=".5"/>
<rect x="40.5" y="289.0" width="6.6" height="7.6" fill="#f4f4f4" stroke="#a8a8a8" stroke-width=".5"/>
<path d="M21.0 290.3 v5 M24.2 290.3 l-2.6 2.5 l2.6 2.5z" stroke="#111" stroke-width=".8" fill="#111"/>
<path d="M30.8 290.3 l-2.6 2.5 l2.6 2.5z" fill="#111"/>
<path d="M35.5 290.3 l2.6 2.5 l-2.6 2.5z" fill="#111"/>
<path d="M42.1 290.3 l2.6 2.5 l-2.6 2.5z M45.3 290.3 v5" stroke="#111" stroke-width=".8" fill="#111"/>
<rect x="294.2" y="289.5" width="6.6" height="7.6" fill="#f4f4f4" stroke="#a8a8a8" stroke-width=".5"/>
<rect x="301.3" y="289.5" width="6.6" height="7.6" fill="#f4f4f4" stroke="#a8a8a8" stroke-width=".5"/>
<rect x="308.4" y="289.5" width="6.6" height="7.6" fill="#f4f4f4" stroke="#a8a8a8" stroke-width=".5"/>
<rect x="315.5" y="289.5" width="6.6" height="7.6" fill="#f4f4f4" stroke="#a8a8a8" stroke-width=".5"/>
<path d="M296.0 290.8 v5 M299.2 290.8 l-2.6 2.5 l2.6 2.5z" stroke="#111" stroke-width=".8" fill="#111"/>
<path d="M305.8 290.8 l-2.6 2.5 l2.6 2.5z" fill="#111"/>
<path d="M310.5 290.8 l2.6 2.5 l-2.6 2.5z" fill="#111"/>
<path d="M317.1 290.8 l2.6 2.5 l-2.6 2.5z M320.3 290.8 v5" stroke="#111" stroke-width=".8" fill="#111"/>
</svg>
<div class="a" style="left:50px;top:288.5px;width:22px;height:8.5px;background:#fff"></div>
<div class="a" style="left:52.8px;top:288.5px;font-size:6px;line-height:9px;font-weight:bold;color:#111;transform:scaleX(.92);transform-origin:0 0">Model</div>
<div class="a" style="left:76.5px;top:288.5px;font-size:6px;line-height:9px;color:#222;transform:scaleX(.92);transform-origin:0 0">Layout1</div>
<svg class="a" style="left:0;top:0" width="600" height="400"><path d="M48.5 289 l2 7.5 M72.5 296.5 l2 -7.5 M96 296.5 l2 -7.5 M323.5 289.5 l2 7.5 M347.5 297 l2 -7.5 M374.5 297 l2 -7.5" stroke="#333" stroke-width=".5"/></svg>
<div class="a" style="left:326px;top:289px;width:22px;height:8.5px;background:#fff"></div>
<div class="a" style="left:328.5px;top:289px;font-size:6px;line-height:9px;font-weight:bold;color:#1a1a1a;transform:scaleX(.92);transform-origin:0 0">Model</div>
<div class="a" style="left:350px;top:289px;width:25px;height:8.5px;background:#dfe7f0"></div>
<div class="a" style="left:353px;top:289px;font-size:6px;line-height:9px;color:#2a4a8a;transform:scaleX(.92);transform-origin:0 0">Layout1</div>
<svg class="a" style="left:0;top:0" width="600" height="400">
<path d="M17 308.5 l3 3 M20 308.5 l-3 3" stroke="#777" stroke-width=".7"/>
<text x="17.3" y="321.5" font-family="Liberation Sans" font-size="4.5" fill="#777">a</text>
<path d="M578.5 312 l2 -2 l2 2" fill="none" stroke="#444" stroke-width=".8"/>
<path d="M578.5 369 l2 2 l2 -2" fill="none" stroke="#444" stroke-width=".8"/>
<path d="M411 397.5 l2.5 -7 l2.5 7 M412 395.5 h3" stroke="#333" stroke-width=".8" fill="none"/><circle cx="413.5" cy="390" r="1" fill="#333"/>
<rect x="429" y="388.5" width="8.5" height="10" fill="#f4ee60"/><path d="M430.5 397.5 l2.5 -7 l2.5 7" stroke="#333" stroke-width=".8" fill="none"/>
<path d="M440.5 397.5 l2.5 -7 l2.5 7 M441.5 395.5 h3" stroke="#333" stroke-width=".8" fill="none"/><circle cx="443" cy="390" r="1" fill="#333"/><circle cx="446" cy="392" r=".8" fill="#e0a020"/>
<rect x="449" y="388.5" width="7.5" height="10" fill="#ddd" stroke="#666" stroke-width=".5"/><path d="M449 393.5 h7.5" stroke="#d22" stroke-width="1"/><path d="M449 391 h7.5 M449 396 h7.5" stroke="#888" stroke-width=".5"/>
<rect x="459" y="388.5" width="7.5" height="10" fill="#ddd" stroke="#666" stroke-width=".5"/><path d="M459 391 h7.5 M459 393.5 h7.5 M459 396 h7.5" stroke="#888" stroke-width=".5"/>
<path d="M471 389 v8.5 h7" stroke="#2a9a3a" stroke-width=".8" fill="none"/><path d="M472 397 h6" stroke="#d22" stroke-width=".8"/>
<circle cx="485" cy="393.5" r="4" fill="#f0e040" stroke="#333" stroke-width=".7"/><path d="M485 391 v3 h2" stroke="#d22" stroke-width=".8" fill="none"/>
<path d="M491 393.5 h8 M495 389.5 v8" stroke="#555" stroke-width=".7"/><circle cx="495" cy="393.5" r="1" fill="#d22"/>
<rect x="502" y="388.5" width="7.5" height="10" fill="#f0e050"/><path d="M503 397 l5 -7 M503 397 h5.5" stroke="#333" stroke-width=".8" fill="none"/>
<path d="M511 393.5 h8 M515 389 v9" stroke="#222" stroke-width="1"/>
</svg>
<div class="a" style="left:521px;top:390px;font-size:5.6px;line-height:8px;font-weight:bold;color:#3a3a50;transform:scaleX(.86);transform-origin:0 0">MODEL</div>
<div class="a" style="left:542px;top:390px;font-size:5.6px;line-height:8px;font-weight:bold;color:#a8acb4;transform:scaleX(.86);transform-origin:0 0">TABLET</div>
<svg class="a" style="left:0;top:0" width="600" height="400">
<circle cx="565" cy="393.5" r="2.6" fill="none" stroke="#1a5ac0" stroke-width="1.8" stroke-dasharray="1 .6"/><circle cx="565" cy="393.5" r="1" fill="#fff"/>
<rect x="572" y="389.5" width="5" height="4" fill="#fff" stroke="#2a4a8a" stroke-width=".7"/><rect x="575" y="392.5" width="5" height="4.5" fill="#fff" stroke="#2a4a8a" stroke-width=".7"/>
<circle cx="586" cy="393.5" r="4" fill="#30a030"/><path d="M584 393.5 l1.5 1.5 l3 -3" stroke="#fff" stroke-width="1.1" fill="none"/>
<path d="M597 397.5 h1 M595 397.5 h1 M597 395.5 h1" stroke="#999" stroke-width=".8"/>
<path d="M385.5 388 v12 M406.7 388 v12" stroke="#b8bcc3" stroke-width=".6"/>
</svg>
<div class="a" style="left:420px;top:390px;font-size:5.8px;line-height:8px;color:#333">1:1</div></body></html>
